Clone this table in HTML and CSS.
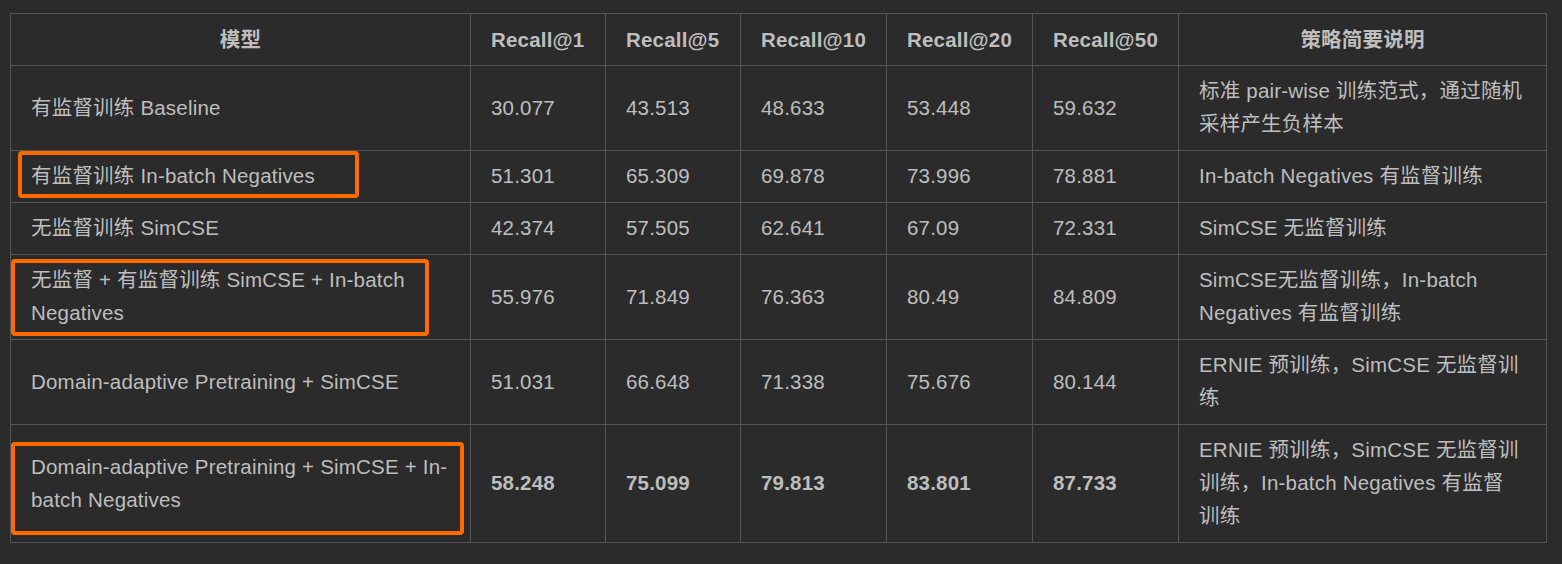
FILE: index.html
```html
<!DOCTYPE html>
<html lang="zh">
<head>
<meta charset="utf-8">
<link rel="stylesheet" href="styles.css">
</head>
<body>
<div class="wrap">
<table class="results">
  <colgroup>
    <col class="c-model"><col class="c-r1"><col class="c-r5"><col class="c-r10"><col class="c-r20"><col class="c-r50"><col class="c-desc">
  </colgroup>
  <thead>
    <tr>
      <th class="center">模型</th>
      <th>Recall@1</th>
      <th>Recall@5</th>
      <th>Recall@10</th>
      <th>Recall@20</th>
      <th>Recall@50</th>
      <th class="center">策略简要说明</th>
    </tr>
  </thead>
  <tbody>
    <tr>
      <td>有监督训练 Baseline</td>
      <td>30.077</td><td>43.513</td><td>48.633</td><td>53.448</td><td>59.632</td>
      <td>标准 pair-wise 训练范式，通过随机采样产生负样本</td>
    </tr>
    <tr>
      <td class="mark">有监督训练 In-batch Negatives<span class="hl hl-1"></span></td>
      <td>51.301</td><td>65.309</td><td>69.878</td><td>73.996</td><td>78.881</td>
      <td>In-batch Negatives 有监督训练</td>
    </tr>
    <tr>
      <td>无监督训练 SimCSE</td>
      <td>42.374</td><td>57.505</td><td>62.641</td><td>67.09</td><td>72.331</td>
      <td>SimCSE 无监督训练</td>
    </tr>
    <tr>
      <td class="mark">无监督 + 有监督训练 SimCSE + In-batch Negatives<span class="hl hl-2"></span></td>
      <td>55.976</td><td>71.849</td><td>76.363</td><td>80.49</td><td>84.809</td>
      <td>SimCSE无监督训练，In-batch Negatives 有监督训练</td>
    </tr>
    <tr>
      <td>Domain-adaptive Pretraining + SimCSE</td>
      <td>51.031</td><td>66.648</td><td>71.338</td><td>75.676</td><td>80.144</td>
      <td>ERNIE 预训练，SimCSE 无监督训练</td>
    </tr>
    <tr class="best">
      <td class="mark">Domain-adaptive Pretraining + SimCSE + In-batch Negatives<span class="hl hl-3"></span></td>
      <td class="b">58.248</td><td class="b">75.099</td><td class="b">79.813</td><td class="b">83.801</td><td class="b">87.733</td>
      <td>ERNIE 预训练，SimCSE 无监督训训练，In-batch Negatives 有监督<span class="nw">训练</span></td>
    </tr>
  </tbody>
</table>
</div>
</body>
</html>
```

FILE: styles.css
```css
html, body {
  margin: 0;
  padding: 0;
  background: #2b2b2b;
}
body {
  font-family: "Liberation Sans", "Noto Sans CJK SC", sans-serif;
  color: #bebebe;
  font-size: 20.5px;
  letter-spacing: 0.2px;
}
.wrap {
  padding: 13px 0 0 10px;
}
.results {
  border-collapse: collapse;
  table-layout: fixed;
  width: 1536px;
}
.c-model { width: 460px; }
.c-r1 { width: 135px; }
.c-r5 { width: 135px; }
.c-r10 { width: 146px; }
.c-r20 { width: 146px; }
.c-r50 { width: 146px; }
.c-desc { width: 368px; }

.results th,
.results td {
  border: 1px solid #555555;
  padding: 8px 20px 10px;
  line-height: 33px;
  text-align: left;
  vertical-align: middle;
  word-break: break-word;
}
.results th {
  font-weight: bold;
  padding-top: 9px;
  padding-bottom: 9px;
}
.results th.center {
  text-align: center;
}
.results td.b {
  font-weight: bold;
}
.nw {
  white-space: nowrap;
}
.results td.mark {
  position: relative;
}
.hl {
  position: absolute;
  border: 4px solid #ff6a00;
  border-radius: 4px;
  box-sizing: border-box;
  pointer-events: none;
}
.hl-1 {
  left: 7px;
  top: 0;
  width: 341px;
  height: 47px;
}
.hl-2 {
  left: 0;
  top: 4px;
  width: 418px;
  height: 77px;
}
.hl-3 {
  left: 0;
  top: 17px;
  width: 453px;
  height: 93px;
}
```
